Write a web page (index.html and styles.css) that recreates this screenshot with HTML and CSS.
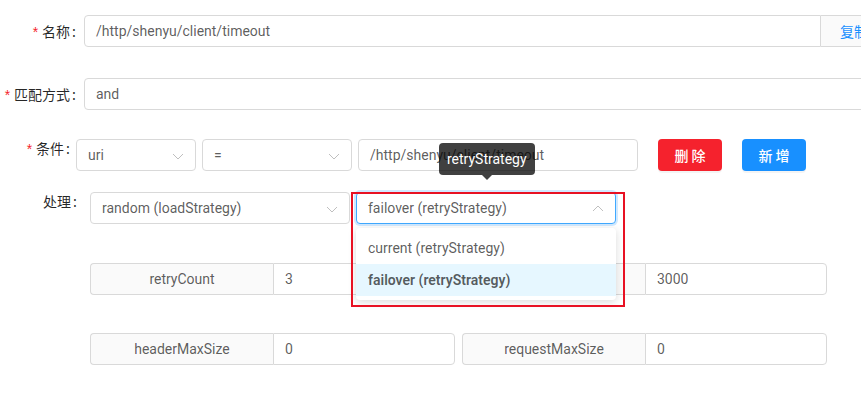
FILE: index.html
```html
<!DOCTYPE html>
<html lang="zh-CN">
<head>
    <meta charset="utf-8">
    <title>选择器</title>
    <link rel="stylesheet" href="styles.css">
</head>
<body>
    <div class="form">
        <!-- 名称 -->
        <div class="row row-name">
            <label class="label label-wide"><span class="req">*</span>名称</label>
            <div class="input-group wide">
                <div class="input grow">/http/shenyu/client/timeout</div>
                <div class="addon addon-copy">复制</div>
            </div>
        </div>

        <!-- 匹配方式 -->
        <div class="row row-match">
            <label class="label label-wide"><span class="req">*</span>匹配方式</label>
            <div class="input wide">and</div>
        </div>

        <!-- 条件 -->
        <div class="row row-cond">
            <label class="label label-cond"><span class="req">*</span>条件</label>
            <div class="select sel-key">
                <span>uri</span>
                <svg class="arrow" viewBox="0 0 12 12"><path d="M1 4l5 5 5-5"/></svg>
            </div>
            <div class="select sel-op">
                <span>=</span>
                <svg class="arrow" viewBox="0 0 12 12"><path d="M1 4l5 5 5-5"/></svg>
            </div>
            <div class="input cond-value">/http/shenyu/client/timeout</div>
            <button class="btn btn-danger">删 除</button>
            <button class="btn btn-primary">新 增</button>
        </div>

        <!-- 处理 -->
        <div class="row row-handle">
            <label class="label label-handle">处理</label>
            <div class="select sel-handle">
                <span>random (loadStrategy)</span>
                <svg class="arrow" viewBox="0 0 12 12"><path d="M1 4l5 5 5-5"/></svg>
            </div>
            <div class="select-wrap">
                <div class="select sel-handle focused">
                    <span>failover (retryStrategy)</span>
                    <svg class="arrow" viewBox="0 0 12 12"><path d="M1 8l5-5 5 5"/></svg>
                </div>
                <ul class="dropdown">
                    <li>current (retryStrategy)</li>
                    <li class="active">failover (retryStrategy)</li>
                </ul>
            </div>
        </div>

        <div class="row row-params">
            <div class="input-group param">
                <div class="addon addon-param">retryCount</div>
                <div class="input grow">3</div>
            </div>
            <div class="input-group param">
                <div class="addon addon-param">timeout</div>
                <div class="input grow">3000</div>
            </div>
        </div>

        <div class="row">
            <div class="input-group param">
                <div class="addon addon-param">headerMaxSize</div>
                <div class="input grow">0</div>
            </div>
            <div class="input-group param">
                <div class="addon addon-param">requestMaxSize</div>
                <div class="input grow">0</div>
            </div>
        </div>
    </div>

    <!-- tooltip over the focused select -->
    <div class="tooltip">retryStrategy</div>

    <!-- red annotation box -->
    <div class="mark"></div>
</body>
</html>
```

FILE: styles.css
```css
/* page */
body {
    margin: 0;
    background: #fff;
    font-family: Roboto, "Noto Sans CJK SC", sans-serif;
    font-size: 14px;
    color: rgba(0, 0, 0, 0.65);
    overflow: hidden;
    width: 861px;
    height: 399px;
}

.form {
    padding-top: 15px;
}

.row {
    display: flex;
    align-items: center;
    height: 32px;
}

.row-name { margin-bottom: 31px; }
.row-match { margin-bottom: 29px; }
.row-cond { margin-bottom: 21px; }
.row-handle { margin-bottom: 39px; }
.row-params { margin-bottom: 38px; padding-left: 90px; }
.row-params + .row { padding-left: 90px; }

/* labels */
.label {
    flex: none;
    box-sizing: border-box;
    text-align: right;
    color: rgba(0, 0, 0, 0.85);
    font-family: "Noto Sans CJK SC", sans-serif;
    white-space: nowrap;
}

.label::after {
    content: ":";
    margin-left: 2px;
}

.label-wide { width: 84px; padding-right: 8px; }
.label-cond { width: 76px; padding-right: 6px; margin-top: -14px; }
.label-handle { width: 90px; padding-right: 13px; margin-top: -14px; }

.req {
    color: #f5222d;
    margin-right: 4px;
    font-family: "Liberation Sans", sans-serif;
}

/* inputs */
.input,
.select,
.addon {
    box-sizing: border-box;
    height: 32px;
    border: 1px solid #d9d9d9;
    background: #fff;
    line-height: 30px;
    padding: 0 11px;
    white-space: nowrap;
    overflow: hidden;
}

.input,
.select {
    border-radius: 4px;
}

.wide { width: 800px; flex: none; }

.input-group {
    display: flex;
    flex: none;
}

.input-group .input.grow {
    flex: 1;
}

.input-group > :first-child {
    border-radius: 4px 0 0 4px;
}

.input-group > :last-child {
    border-radius: 0 4px 4px 0;
}

.addon {
    background: #fafafa;
    flex: none;
}

.addon-copy {
    width: 63px;
    padding-left: 19px;
    border-left: 0;
    color: #1890ff;
    font-family: "Noto Sans CJK SC", sans-serif;
}

.row-name .input.grow {
    flex: none;
    width: 737px;
}

.param { width: 365px; }
.param + .param { margin-left: 7px; }

.addon-param {
    width: 183px;
    text-align: center;
    border-right: 0;
}

/* selects */
.select {
    position: relative;
    flex: none;
}

.select .arrow {
    position: absolute;
    right: 11px;
    top: 10px;
    width: 12px;
    height: 12px;
    fill: none;
    stroke: #bfbfbf;
    stroke-width: 1;
}

.sel-key { width: 120px; }
.sel-op { width: 150px; margin-left: 6px; }
.cond-value { width: 280px; margin-left: 6px; flex: none; }
.sel-handle { width: 260px; }

.select-wrap {
    position: relative;
    margin-left: 6px;
}

.focused {
    border-color: #40a9ff;
    box-shadow: 0 0 0 2px rgba(24, 144, 255, 0.2);
}

.dropdown {
    position: absolute;
    top: 36px;
    left: 0;
    width: 260px;
    margin: 0;
    padding: 4px 0;
    list-style: none;
    background: #fff;
    border-radius: 4px;
    box-shadow: 0 2px 8px rgba(0, 0, 0, 0.15);
    z-index: 2;
}

.dropdown li {
    height: 32px;
    line-height: 32px;
    padding: 0 12px;
}

.dropdown li.active {
    background: #e6f7ff;
    font-weight: 600;
}

/* buttons */
.btn {
    flex: none;
    width: 64px;
    height: 32px;
    border: none;
    border-radius: 4px;
    color: #fff;
    font-family: "Noto Sans CJK SC", sans-serif;
    font-size: 14px;
    font-weight: 500;
    box-shadow: 0 2px 0 rgba(0, 0, 0, 0.045);
    cursor: pointer;
}

.btn-danger {
    background: #f5222d;
    margin-left: 20px;
}

.btn-primary {
    background: #1890ff;
    margin-left: 20px;
}

/* overlays */
.tooltip {
    position: absolute;
    left: 439px;
    top: 143px;
    height: 32px;
    line-height: 32px;
    padding: 0 8px;
    background: rgba(0, 0, 0, 0.75);
    color: #fff;
    border-radius: 4px;
    z-index: 3;
}

.tooltip::after {
    content: "";
    position: absolute;
    left: 50%;
    bottom: -5px;
    margin-left: -5px;
    border-left: 5px solid transparent;
    border-right: 5px solid transparent;
    border-top: 5px solid rgba(0, 0, 0, 0.75);
}

.mark {
    position: absolute;
    left: 351px;
    top: 192px;
    width: 274px;
    height: 115px;
    box-sizing: border-box;
    border: 2px solid #e81123;
    z-index: 4;
}
```
